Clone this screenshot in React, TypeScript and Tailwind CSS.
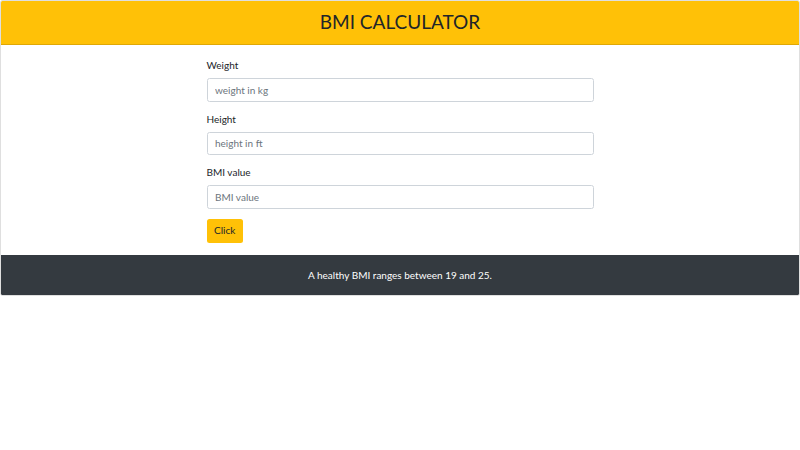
import { useState } from 'react'

const font = { fontFamily: '"Segoe UI", Lato, "Noto Sans", "Liberation Sans", sans-serif' }

function Field({ label, placeholder, value, onChange, readOnly }: {
  label: string
  placeholder: string
  value: string
  onChange?: (v: string) => void
  readOnly?: boolean
}) {
  return (
    <div className="mb-[10px]">
      <label className="block mb-[5px] text-[10px] leading-[15px] text-[#212529]">{label}</label>
      <input
        type="text"
        placeholder={placeholder}
        value={value}
        readOnly={readOnly}
        onChange={(e) => onChange && onChange(e.target.value)}
        className="block w-full h-[23.5px] px-[7.5px] text-[10px] text-[#495057] bg-white border border-[#ced4da] rounded-[2.5px] placeholder:text-[#6c757d] outline-none"
      />
    </div>
  )
}

export default function App() {
  const [weight, setWeight] = useState('')
  const [height, setHeight] = useState('')
  const [bmi, setBmi] = useState('')

  const calc = () => {
    const w = parseFloat(weight)
    const h = parseFloat(height) * 0.3048
    if (!w || !h) return
    setBmi((w / (h * h)).toFixed(2))
  }

  return (
    <div className="w-[800px] h-[450px] bg-white" style={font}>
      <div className="border border-black/[.125] rounded-[2.5px] overflow-hidden">
        <div className="h-[44px] bg-[#ffc107] border-b border-black/[.125] flex items-center justify-center">
          <h1 className="text-[19px] leading-[24px] font-normal text-[#212529] -mt-[2px]">BMI CALCULATOR</h1>
        </div>
        <div className="px-[12.5px] pt-[13px] pb-[12.5px]">
          <div className="w-[387px] mx-auto">
            <Field label="Weight" placeholder="weight in kg" value={weight} onChange={setWeight} />
            <Field label="Height" placeholder="height in ft" value={height} onChange={setHeight} />
            <Field label="BMI value" placeholder="BMI value" value={bmi} readOnly />
            <button
              onClick={calc}
              className="block h-[24px] px-[7.5px] text-[10px] leading-[15px] text-[#212529] bg-[#ffc107] rounded-[2.5px]"
            >
              Click
            </button>
          </div>
        </div>
        <div className="h-[40px] bg-[#343a40] flex items-center justify-center">
          <p className="text-[10px] leading-[15px] text-white">A healthy BMI ranges between 19 and 25.</p>
        </div>
      </div>
    </div>
  )
}
